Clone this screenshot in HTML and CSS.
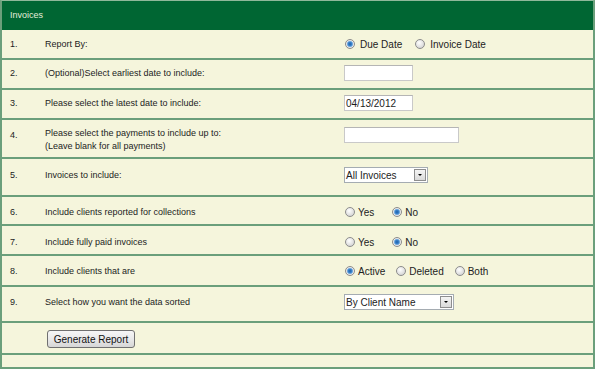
FILE: index.html
```html
<!DOCTYPE html>
<html lang="en">
<head>
    <meta charset="UTF-8">
    <title>Invoices</title>
    <link rel="stylesheet" href="styles.css">
</head>
<body>
    <div class="report">
        <div class="report-head">Invoices</div>

        <!-- 1 -->
        <div class="row r1">
            <div class="num">1.</div>
            <div class="label">Report By:</div>
            <div class="field wide">
                <label><input type="radio" name="by" checked> Due Date</label>
                <label><input type="radio" name="by"> Invoice Date</label>
            </div>
        </div>

        <!-- 2 -->
        <div class="row r2">
            <div class="num">2.</div>
            <div class="label">(Optional)Select earliest date to include:</div>
            <div class="field"><input type="text" class="date"></div>
        </div>

        <!-- 3 -->
        <div class="row r3">
            <div class="num">3.</div>
            <div class="label">Please select the latest date to include:</div>
            <div class="field"><input type="text" class="date" value="04/13/2012"></div>
        </div>

        <!-- 4 -->
        <div class="row r4">
            <div class="num">4.</div>
            <div class="label two">Please select the payments to include up to:<br>(Leave blank for all payments)</div>
            <div class="field"><input type="text" class="pay"></div>
        </div>

        <!-- 5 -->
        <div class="row r5">
            <div class="num">5.</div>
            <div class="label">Invoices to include:</div>
            <div class="field">
                <div class="select s-inv"><span>All Invoices</span><i class="arrow"></i></div>
            </div>
        </div>

        <!-- 6 -->
        <div class="row r6">
            <div class="num">6.</div>
            <div class="label">Include clients reported for collections</div>
            <div class="field yn">
                <label class="yes"><input type="radio" name="coll">Yes</label>
                <label><input type="radio" name="coll" checked>No</label>
            </div>
        </div>

        <!-- 7 -->
        <div class="row r7">
            <div class="num">7.</div>
            <div class="label">Include fully paid invoices</div>
            <div class="field yn">
                <label class="yes"><input type="radio" name="paid">Yes</label>
                <label><input type="radio" name="paid" checked>No</label>
            </div>
        </div>

        <!-- 8 -->
        <div class="row r8">
            <div class="num">8.</div>
            <div class="label">Include clients that are</div>
            <div class="field yn">
                <label><input type="radio" name="state" checked>Active</label>
                <label><input type="radio" name="state">Deleted</label>
                <label><input type="radio" name="state">Both</label>
            </div>
        </div>

        <!-- 9 -->
        <div class="row r9">
            <div class="num">9.</div>
            <div class="label">Select how you want the data sorted</div>
            <div class="field">
                <div class="select s-sort"><span>By Client Name</span><i class="arrow"></i></div>
            </div>
        </div>

        <div class="row r10">
            <div class="num"></div>
            <button class="go">Generate Report</button>
        </div>

        <div class="row r11"></div>
    </div>
</body>
</html>
```

FILE: styles.css
```css
body {
    margin: 0;
    font-family: "Liberation Sans", Arial, sans-serif;
    color: #1c1c1c;
}
.report {
    width: 591px;
    background-color: #f5f5dc;
    border: 2px solid #6b9f7b;
    border-top: 1px solid #8fb89a;
}
.report-head {
    height: 29px;
    line-height: 28px;
    padding-left: 8px;
    background-color: #006633;
    color: #e4eedb;
    font-size: 9px;
    box-sizing: border-box;
}
.row {
    display: flex;
    align-items: flex-start;
    border-bottom: 2px solid #6b9f7b;
    box-sizing: border-box;
    font-size: 9px;
}
.num,
.label,
.field {
    min-height: 16px;
    display: flex;
    align-items: center;
}
.num {
    width: 35px;
    padding-left: 8px;
}
.label {
    width: 299px;
}
.label.two {
    display: block;
    line-height: 13px;
}
.field {
    font-size: 10px;
    color: #222;
}
.field label {
    display: flex;
    align-items: center;
}

/* радио-кнопки */
input[type="radio"] {
    appearance: none;
    -webkit-appearance: none;
    width: 10px;
    height: 10px;
    margin: 0 3px 0 1px;
    border: 1px solid #8c8c8c;
    border-radius: 50%;
    box-sizing: border-box;
    background: radial-gradient(circle at 40% 35%, #ffffff 0%, #e2e2e2 55%, #c8c8c8 100%);
}
input[type="radio"]:checked {
    background: radial-gradient(circle, #1f5fa8 0, #3d86cf 2px, #9cc3e6 3px, #eaeaea 3.5px, #d0d0d0 100%);
}
.wide label {
    margin-right: 12px;
}
.wide input[type="radio"] {
    margin-right: 5px;
}
.yn label {
    margin-right: 10px;
}
.yn label.yes {
    margin-right: 17px;
}

/* поля ввода */
input[type="text"] {
    height: 16px;
    box-sizing: border-box;
    border: 1px solid #c9c9c9;
    border-top-color: #b5b5b5;
    background: #fff;
    font: 10px "Liberation Sans", Arial, sans-serif;
    color: #1c1c1c;
    padding: 0 0 0 1px;
    margin: 0;
    outline: none;
}
.date {
    width: 69px;
}
.pay {
    width: 115px;
}
.select {
    height: 16px;
    box-sizing: border-box;
    border: 1px solid #a5acb2;
    background: #fff;
    display: flex;
    align-items: center;
    justify-content: space-between;
    padding-left: 1px;
    font-size: 10px;
}
.s-inv {
    width: 84px;
}
.s-sort {
    width: 110px;
}
.arrow {
    width: 12px;
    height: 12px;
    margin-right: 1px;
    box-sizing: border-box;
    border: 1px solid #8e8e8e;
    background: linear-gradient(#f4f4f4, #dadada);
    position: relative;
}
.arrow::after {
    content: "";
    position: absolute;
    left: 3px;
    top: 4px;
    border-left: 2px solid transparent;
    border-right: 2px solid transparent;
    border-top: 2px solid #000;
}
.go {
    margin-left: 2px;
    width: 88px;
    height: 18px;
    padding: 0;
    border: 1px solid #707070;
    border-radius: 3px;
    background: linear-gradient(#f6f6f6 0%, #e9e9e9 50%, #d6d6d6 100%);
    font: 10px "Liberation Sans", Arial, sans-serif;
    color: #111;
}

/* высоты строк */
.r1 { height: 30px; padding-top: 6px; }
.r2 { height: 30px; padding-top: 5px; }
.r3 { height: 30px; padding-top: 5px; }
.r4 { height: 39px; padding-top: 7px; }
.r5 { height: 38px; padding-top: 8px; }
.r6 { height: 29px; padding-top: 7px; }
.r7 { height: 30px; padding-top: 8px; }
.r8 { height: 31px; padding-top: 7px; }
.r9 { height: 36px; padding-top: 7px; }
.r10 { height: 32px; padding-top: 7px; }
.r11 { height: 12px; border-bottom: none; }
```
